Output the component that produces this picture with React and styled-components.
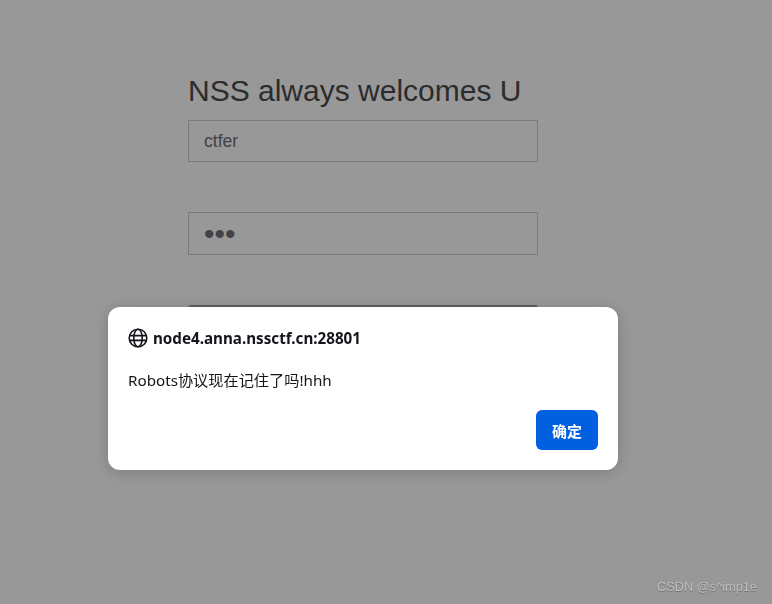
import React from "react";
import styled, { createGlobalStyle } from "styled-components";

const GlobalStyle = createGlobalStyle`
  html, body {
    margin: 0;
    padding: 0;
    height: 100%;
    background: #fdfdff;
    overflow: hidden;
  }
`;

const Page = styled.div`
  width: 772px;
  height: 604px;
  padding: 72px 0 0 188px;
  box-sizing: border-box;
  font-family: "Liberation Sans", Arial, sans-serif;
`;

const LoginForm = styled.form`
  width: 350px;
  display: flex;
  flex-direction: column;
`;

const Title = styled.h2`
  margin: 0 0 10px;
  font-size: 30px;
  line-height: 38px;
  font-weight: 400;
  color: #4a4a4a;
  white-space: nowrap;
`;

const Field = styled.input`
  box-sizing: border-box;
  width: 100%;
  height: ${props => props.$height}px;
  margin-bottom: ${props => props.$gap}px;
  padding: 0 15px;
  border: 1px solid #ccc;
  background: transparent;
  color: #6f6f78;
  font-family: inherit;
  font-size: ${props => props.$size}px;
  outline: none;
`;

const SubmitBtn = styled.button`
  height: 42px;
  border: 0;
  border-radius: 3px;
  background: #a0a0a0;
`;

const Backdrop = styled.div`
  position: fixed;
  inset: 0;
  background: rgba(0, 0, 0, 0.4);
`;

const Dialog = styled.div`
  position: absolute;
  left: 108px;
  top: 307px;
  width: 510px;
  height: 163px;
  box-sizing: border-box;
  padding: 20px;
  display: flex;
  flex-direction: column;
  border-radius: 12px;
  background: #fff;
  box-shadow: 0 2px 16px rgba(0, 0, 0, 0.2);
  font-family: "Noto Sans", "Noto Sans CJK SC", sans-serif;
`;

const DialogHead = styled.div`
  display: flex;
  align-items: center;
  gap: 5px;
  height: 21px;
  font-size: 15.2px;
  font-weight: 700;
  color: #15141a;
`;

const DialogText = styled.p`
  margin: 22px 0 0;
  font-size: 15.2px;
  line-height: 20px;
  color: #15141a;
`;

const DialogFoot = styled.div`
  margin-top: auto;
  display: flex;
  justify-content: flex-end;
`;

const OkBtn = styled.button`
  width: 62px;
  height: 40px;
  border: 0;
  border-radius: 6px;
  background: #0060df;
  color: #fff;
  font-family: "Noto Sans CJK SC", sans-serif;
  font-size: 15px;
  font-weight: 700;
`;

const Watermark = styled.span`
  position: absolute;
  right: 15px;
  bottom: 10px;
  font-family: "Liberation Sans", Arial, sans-serif;
  font-size: 12.8px;
  line-height: 14px;
  color: #bdbdbd;
  text-shadow: 0 1px 1px rgba(0, 0, 0, 0.3);
`;

const GlobeIcon = () => (
  <svg width="20" height="20" viewBox="0 0 20 20" fill="none" stroke="#15141a" strokeWidth="1.6">
    <circle cx="10" cy="10" r="8.8" />
    <ellipse cx="10" cy="10" rx="4.2" ry="8.8" />
    <path d="M1.6 7.6h16.8M1.6 12.4h16.8" />
  </svg>
);

const App = () => {
  return (
    <>
      <GlobalStyle />
      <Page>
        <LoginForm>
          <Title>NSS always welcomes U</Title>
          <Field $height={42} $gap={50} $size={17.6} defaultValue="ctfer" />
          <Field $height={43} $gap={50} $size={30} type="password" defaultValue="abc" />
          <SubmitBtn type="button" />
        </LoginForm>
      </Page>
      <Backdrop>
        <Dialog>
          <DialogHead>
            <GlobeIcon />
            node4.anna.nssctf.cn:28801
          </DialogHead>
          <DialogText>Robots协议现在记住了吗!hhh</DialogText>
          <DialogFoot>
            <OkBtn type="button">确定</OkBtn>
          </DialogFoot>
        </Dialog>
        <Watermark>CSDN @s^imp1e</Watermark>
      </Backdrop>
    </>
  );
};

export default App;
